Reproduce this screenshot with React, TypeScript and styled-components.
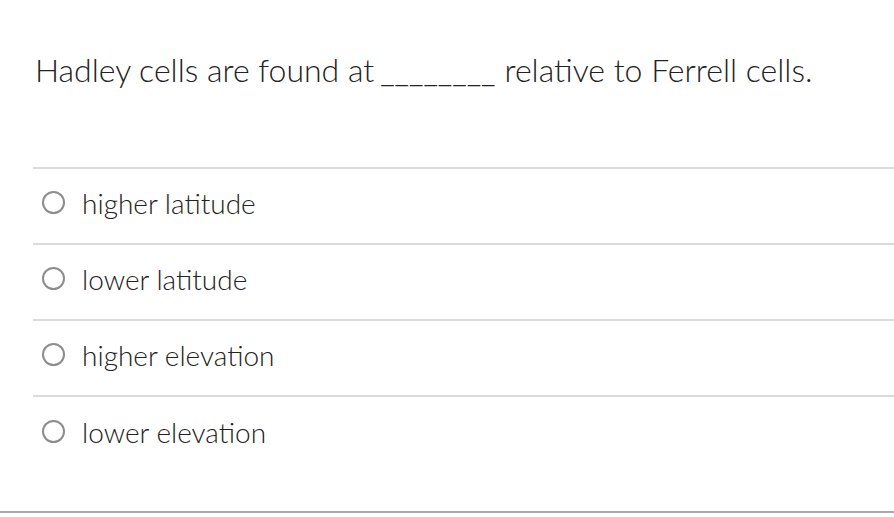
import styled, { createGlobalStyle } from "styled-components";

const GlobalStyle = createGlobalStyle`
  html, body {
    margin: 0;
    padding: 0;
    background: #ffffff;
  }
  body {
    font-family: Lato, "Liberation Sans", sans-serif;
    color: #2d3b45;
  }
`;

const Page = styled.div`
  width: 894px;
  height: 513px;
  display: flex;
  flex-direction: column;
  box-sizing: border-box;
  border-bottom: 2px solid #a8a8a8;
  overflow: hidden;
`;

const Question = styled.p`
  margin: 0;
  padding: 49px 0 0 35px;
  height: 115px;
  box-sizing: border-box;
  font-size: 32px;
  font-weight: 300;
  line-height: 42px;
  color: #222;
`;

const Blank = styled.span`
  margin: 0 9px 0 6px;
`;

const Answers = styled.div`
  margin-left: 33px;
  border-top: 2px solid #dcdcdc;
  margin-top: 52px;
`;

const Answer = styled.label`
  display: flex;
  align-items: center;
  box-sizing: border-box;
  height: 76px;
  padding: 0 0 7px 9px;
  gap: 17px;
  border-bottom: 2px solid #dcdcdc;
  font-size: 28px;
  font-weight: 300;
  color: #222;

  &:last-child {
    border-bottom: none;
  }
`;

const Radio = styled.span`
  width: 19px;
  height: 19px;
  border-radius: 50%;
  border: 2.5px solid #8c8c8c;
  flex-shrink: 0;
`;

const answers = ["higher latitude", "lower latitude", "higher elevation", "lower elevation"];

export default function App() {
  return (
    <Page>
      <GlobalStyle />
      <Question>
        Hadley cells are found at<Blank>________</Blank>relative to Ferrell cells.
      </Question>
      <Answers>
        {answers.map((a) => (
          <Answer key={a}>
            <Radio />
            {a}
          </Answer>
        ))}
      </Answers>
    </Page>
  );
}
